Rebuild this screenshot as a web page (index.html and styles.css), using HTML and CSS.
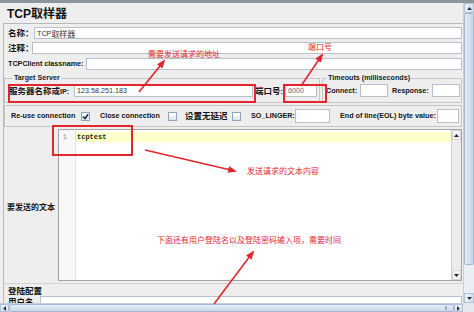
FILE: index.html
```html
<!DOCTYPE html>
<html>
<head>
<meta charset="utf-8">
<link rel="stylesheet" href="styles.css">
</head>
<body>
<div class="top-strip"></div>
<div class="window">
  <div class="viewport">
    <div class="content">
      <div class="title">TCP<span class="ct">取样器</span></div>
      <div class="panel">
        <div class="row row-name">
          <span class="lbl w-name"><span class="c">名称：</span></span>
          <div class="input"><span class="val">TCP</span><span class="cn">取样器</span></div>
        </div>
        <div class="row row-comment">
          <span class="lbl w-comment"><span class="c">注释：</span></span>
          <div class="input"></div>
        </div>
        <div class="row row-class">
          <span class="lbl w-class">TCPClient classname:</span>
          <div class="input"></div>
        </div>
        <div class="sets">
          <fieldset class="fs fs-server">
            <legend>Target Server</legend>
            <div class="fs-row">
              <span class="lbl w-server"><span class="c">服务器名称或</span>IP:</span>
              <div class="input i-server"><span class="val">123.58.251.183</span></div>
              <span class="lbl w-port"><span class="c">端口号</span>:</span>
              <div class="input i-port"><span class="val dim">6000</span></div>
            </div>
          </fieldset>
          <fieldset class="fs fs-time">
            <legend>Timeouts (milliseconds)</legend>
            <div class="fs-row">
              <span class="lbl w-connect">Connect:</span>
              <div class="input i-connect"></div>
              <span class="lbl w-resp">Response:</span>
              <div class="input i-resp"></div>
            </div>
          </fieldset>
        </div>
        <div class="options">
          <span class="lbl o-reuse">Re-use connection</span>
          <span class="cb"><svg width="7" height="7" viewBox="0 0 7 7"><path d="M1 3.5 L3 5.5 L6.2 1.2" fill="none" stroke="#1c2a3c" stroke-width="1.5"/></svg></span>
          <span class="lbl o-close">Close connection</span>
          <span class="cb"></span>
          <span class="lbl o-nodelay"><span class="c">设置无延迟</span></span>
          <span class="cb"></span>
          <span class="lbl o-linger">SO_LINGER:</span>
          <div class="input i-linger"></div>
          <span class="lbl o-eol">End of line(EOL) byte value:</span>
          <div class="input i-eol"></div>
        </div>
        <div class="editor-row">
          <div class="ed-label"><span class="c">要发送的文本</span></div>
          <div class="editor">
            <div class="gutter"><div class="ln">1</div></div>
            <div class="code"><div class="line hl">tcptest</div></div>
            <div class="ed-scroll">
              <div class="arrow-btn"><svg width="5" height="3" viewBox="0 0 5 3"><path d="M0 3 L2.5 0 L5 3 Z" fill="#222"/></svg></div>
              <div class="ed-track"></div>
              <div class="arrow-btn"><svg width="5" height="3" viewBox="0 0 5 3"><path d="M0 0 L2.5 3 L5 0 Z" fill="#222"/></svg></div>
            </div>
          </div>
        </div>
        <div class="login">
          <div class="login-title"><span class="c">登陆配置</span></div>
          <div class="row row-user">
            <span class="lbl w-user"><span class="c">用户名</span></span>
            <div class="input"></div>
          </div>
        </div>
      </div>
    </div>
    <div class="vscroll">
      <div class="sb-btn"><svg width="5" height="3" viewBox="0 0 5 3"><path d="M0 3 L2.5 0 L5 3 Z" fill="#333"/></svg></div>
      <div class="v-thumb"></div>
      <div class="v-track"></div>
      <div class="sb-btn"><svg width="5" height="3" viewBox="0 0 5 3"><path d="M0 0 L2.5 3 L5 0 Z" fill="#333"/></svg></div>
    </div>
  </div>
  <div class="hbar">
    <div class="hscroll">
      <div class="sb-btn h"><svg width="3" height="5" viewBox="0 0 3 5"><path d="M3 0 L0 2.5 L3 5 Z" fill="#333"/></svg></div>
      <div class="h-thumb"><span class="grip"></span></div>
      <div class="sb-btn h"><svg width="3" height="5" viewBox="0 0 3 5"><path d="M0 0 L3 2.5 L0 5 Z" fill="#333"/></svg></div>
    </div>
    <div class="corner"></div>
  </div>
</div>

<svg class="overlay" width="474" height="312" viewBox="0 0 474 312">
  <defs>
    <marker id="ah" markerUnits="userSpaceOnUse" markerWidth="9" markerHeight="7" refX="7" refY="3.5" orient="auto">
      <path d="M0 0 L9 3.5 L0 7 Z" fill="#e3262e"/>
    </marker>
  </defs>
  <rect x="9" y="85" width="246" height="17" fill="none" stroke="#e3262e" stroke-width="2"/>
  <rect x="284" y="85" width="42" height="17" fill="none" stroke="#e3262e" stroke-width="2"/>
  <rect x="53" y="126" width="79" height="29" fill="none" stroke="#e3262e" stroke-width="2"/>
  <line x1="139" y1="92" x2="164" y2="61" stroke="#e3262e" stroke-width="1.6" marker-end="url(#ah)"/>
  <line x1="301" y1="86" x2="322" y2="55" stroke="#e3262e" stroke-width="1.6" marker-end="url(#ah)"/>
  <line x1="145" y1="150" x2="235" y2="171" stroke="#e3262e" stroke-width="1.6" marker-end="url(#ah)"/>
  <line x1="214" y1="304" x2="253" y2="252" stroke="#e3262e" stroke-width="1.6" marker-end="url(#ah)"/>
</svg>
<div class="note n-addr">需要发送请求的地址</div>
<div class="note n-port">端口号</div>
<div class="note n-text">发送请求的文本内容</div>
<div class="note n-more">下面还有用户登陆名以及登陆密码输入项，需要时间</div>
</body>
</html>
```

FILE: styles.css
```css
* { box-sizing: border-box; margin: 0; padding: 0; }
html, body { width: 474px; height: 312px; overflow: hidden; }
body {
  background: #eeeeee;
  font-family: "Liberation Sans", Arial, sans-serif;
  font-size: 7.2px;
  font-weight: bold;
  color: #151515;
  position: relative;
}
.c { font-family: "Noto Sans CJK SC", sans-serif; font-size: 8.5px; }
.cn { font-family: "Noto Sans CJK SC", sans-serif; font-size: 8px; font-weight: normal; color: #333; }

.top-strip { height: 3px; background: #8e949b; }
.window { display: flex; flex-direction: column; height: 309px; }
.viewport { display: flex; height: 300px; }
.content { width: 463px; height: 300px; overflow: hidden; display: flex; flex-direction: column; }

.title { height: 20px; line-height: 20px; padding-left: 7px; font-size: 12px; flex: none; }
.ct { font-family: "Noto Sans CJK SC", sans-serif; font-size: 12px; }

.panel {
  margin-left: 3px;
  border-left: 1px solid #b9b9b9;
  border-top: 1px solid #b9b9b9;
  flex: 1;
  display: flex;
  flex-direction: column;
}
.row { display: flex; align-items: center; height: 12px; flex: none; padding-left: 4px; }
.row-name { margin-top: 3px; }
.row-comment { margin-top: 3px; }
.row-class { margin-top: 4px; }
.lbl { white-space: nowrap; flex: none; line-height: 12px; overflow: visible; }
.w-name { width: 26px; }
.w-comment { width: 24px; }
.w-class { width: 78px; }
.input {
  background: #fff;
  border: 1px solid #b7bfca;
  height: 12px;
  flex: 1;
  display: flex;
  align-items: center;
  padding-left: 2px;
  margin-right: 1px;
  overflow: hidden;
  white-space: nowrap;
}
.val { font-weight: normal; color: #333; }
.val.dim { color: #5a6a80; }

.sets { display: flex; margin-top: 4px; height: 30px; flex: none; }
.fs {
  border: 1px solid #c6c6c6;
  padding: 0 2px 3px 4px;
  height: 29px;
  min-width: 0;
  flex: none;
}
.fs legend { padding: 0 1px; margin-left: 4px; line-height: 8px; height: 8px; color: #222; }
.fs-server { width: 316px; }
.fs-time { width: 140px; margin-left: 2px; padding-left: 3px; padding-right: 1px; }
.fs-time legend { margin-left: 1px; }
.fs-row { display: flex; align-items: center; height: 13px; margin-top: 2px; }
.fs-row .input { height: 13px; flex: none; margin-right: 0; }
.w-server { width: 65px; }
.i-server { width: 179px; }
.w-port { width: 32px; padding-left: 2px; }
.i-port { width: 32px; }
.w-connect { width: 34px; }
.i-connect { width: 28px; }
.w-resp { width: 44px; padding-left: 4px; }
.i-resp { width: 28px; }

.options {
  margin-top: 1px;
  height: 22px;
  flex: none;
  border: 1px solid #c6c6c6;
  margin-right: 1px;
  display: flex;
  align-items: center;
  padding-left: 6px;
}
.cb {
  width: 9px; height: 9px; flex: none;
  border: 1px solid #8fa3bd;
  background: linear-gradient(#ffffff, #d9e3ef);
  display: flex; align-items: center; justify-content: center;
}
.o-reuse { width: 70px; }
.o-close { width: 68px; margin-left: 10px; }
.o-nodelay { width: 47px; margin-left: 8px; }
.o-linger { width: 44px; margin-left: 10px; }
.options .input { flex: none; height: 14px; margin-right: 0; }
.i-linger { width: 35px; }
.o-eol { width: 97px; margin-left: 10px; }
.i-eol { width: 22px; }

.editor-row { display: flex; margin-top: 2px; height: 152px; flex: none; }
.ed-label {
  width: 54px; flex: none;
  display: flex; align-items: center;
  padding-left: 3px;
  padding-top: 2px;
}
.ed-label .c { font-size: 8px; }
.editor {
  flex: 1;
  margin-right: 1px;
  border: 1px solid #a3a3a3;
  background: #fff;
  display: flex;
}
.gutter { width: 17px; flex: none; background: #f7f7f7; border-right: 1px solid #e0e0e0; padding-top: 2px; }
.ln { font-family: "Liberation Mono", monospace; font-weight: normal; font-size: 7px; color: #8a8a8a; line-height: 10px; text-align: right; padding-right: 8px; }
.code { flex: 1; padding-top: 2px; }
.line { font-family: "Liberation Mono", monospace; font-size: 7px; line-height: 10px; color: #1b2a10; padding-left: 1px; }
.line.hl { background: #ffffc9; }
.ed-scroll {
  width: 10px; flex: none;
  background: #ececec;
  border-left: 1px solid #d0d0d0;
  display: flex; flex-direction: column;
}
.arrow-btn { height: 10px; display: flex; align-items: center; justify-content: center; background: #f2f2f2; border: 1px solid #d6d6d6; }
.ed-track { flex: 1; }

.login { flex: none; margin-top: 2px; border-top: 1px solid #d3d3d3; }
.login-title { height: 11px; line-height: 11px; padding-left: 4px; margin-top: 1px; }
.row-user { margin-top: 0; height: 12px; }
.w-user { width: 32px; }

.vscroll {
  width: 11px; height: 300px;
  background: #e9eef5;
  border-left: 1px solid #c5cfdb;
  display: flex; flex-direction: column;
}
.sb-btn {
  height: 10px; flex: none;
  display: flex; align-items: center; justify-content: center;
  background: linear-gradient(90deg, #eef3fa, #d5e1ef);
  border: 1px solid #b2c2d6;
}
.v-thumb {
  height: 252px; flex: none;
  background: linear-gradient(90deg, #e3ecf7, #c6d7ec);
  border: 1px solid #a4b8d2;
  border-radius: 2px;
}
.v-track { flex: 1; }

.hbar { display: flex; height: 9px; }
.hscroll {
  width: 463px;
  display: flex;
  background: #e9eef5;
  border-top: 1px solid #c5cfdb;
}
.sb-btn.h { width: 9px; height: auto; background: linear-gradient(#eef3fa, #d5e1ef); }
.h-thumb {
  flex: 1;
  background: linear-gradient(#e6eef8, #c8d8ec);
  border: 1px solid #a4b8d2;
  border-radius: 2px;
  display: flex; align-items: center; justify-content: flex-end;
  padding-right: 6px;
}
.grip { width: 2px; height: 4px; border-left: 1px solid #9aaec8; border-right: 1px solid #9aaec8; }
.corner { width: 11px; background: #e4e9f0; }

.overlay { position: absolute; left: 0; top: 0; pointer-events: none; }
.note {
  position: absolute;
  font-family: "Noto Sans CJK SC", sans-serif;
  font-weight: normal;
  font-size: 8px;
  line-height: 9px;
  color: #e3262e;
  white-space: nowrap;
}
.n-addr { left: 148px; top: 49px; }
.n-port { left: 308px; top: 42px; }
.n-text { left: 247px; top: 166px; }
.n-more { left: 157px; top: 235px; }
```
